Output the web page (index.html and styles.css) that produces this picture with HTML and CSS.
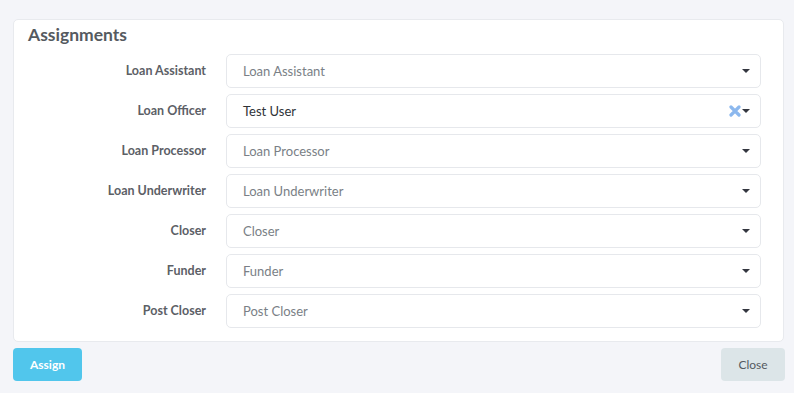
FILE: index.html
```html
<!DOCTYPE html>
<html>
<head>
<meta charset="utf-8">
<link rel="stylesheet" href="styles.css">
</head>
<body>
<div class="modal">
  <div class="card">
    <div class="title">Assignments</div>
    <div class="form">
      <label class="lbl">Loan Assistant</label>
      <div class="select"><span class="ph">Loan Assistant</span><span class="caret"></span></div>
      <label class="lbl">Loan Officer</label>
      <div class="select"><span class="val">Test User</span><svg class="clear" width="12" height="12" viewBox="0 0 12 12"><path d="M2 2 L10 10 M10 2 L2 10" stroke="#8cb8ee" stroke-width="3.2" stroke-linecap="round"/></svg><span class="caret tight"></span></div>
      <label class="lbl">Loan Processor</label>
      <div class="select"><span class="ph">Loan Processor</span><span class="caret"></span></div>
      <label class="lbl">Loan Underwriter</label>
      <div class="select"><span class="ph">Loan Underwriter</span><span class="caret"></span></div>
      <label class="lbl">Closer</label>
      <div class="select"><span class="ph">Closer</span><span class="caret"></span></div>
      <label class="lbl">Funder</label>
      <div class="select"><span class="ph">Funder</span><span class="caret"></span></div>
      <label class="lbl">Post Closer</label>
      <div class="select"><span class="ph">Post Closer</span><span class="caret"></span></div>
    </div>
  </div>
  <div class="actions">
    <button class="btn assign">Assign</button>
    <button class="btn close">Close</button>
  </div>
</div>
</body>
</html>
```
FILE: styles.css
```css
* { box-sizing: border-box; }
html, body { margin: 0; padding: 0; }
body {
  background: #f4f5f9;
  font-family: Lato, "Liberation Sans", sans-serif;
  width: 794px;
  height: 393px;
  overflow: hidden;
}
.modal {
  padding: 19px 10px 0 13px;
}
.card {
  background: #fff;
  border: 1px solid #e8eaee;
  border-radius: 5px;
  padding: 2px 22px 13px 14px;
}
.title {
  font-size: 17.5px;
  font-weight: 700;
  color: #555a60;
  line-height: 26px;
  margin-bottom: 6px;
}
.form {
  display: grid;
  grid-template-columns: 178px 1fr;
  column-gap: 20px;
  row-gap: 6px;
  align-items: center;
}
.lbl {
  text-align: right;
  font-size: 12.5px;
  font-weight: 700;
  color: #5c6066;
  line-height: 16px;
}
.select {
  height: 34px;
  border: 1px solid #e6e8ec;
  border-radius: 5px;
  display: flex;
  align-items: center;
  padding: 0 10px 0 16px;
  font-size: 13px;
}
.ph { color: #7a7f86; flex: 1; }
.val { color: #2f3338; flex: 1; }
.clear { margin-right: 1px; }
.caret {
  width: 0; height: 0;
  border-left: 4px solid transparent;
  border-right: 4px solid transparent;
  border-top: 4px solid #33363f;
}
.actions {
  display: flex;
  justify-content: space-between;
  margin-top: 6px;
}
.btn {
  height: 33px;
  border: none;
  border-radius: 4px;
  font-family: Lato, "Liberation Sans", sans-serif;
  font-size: 12px;
  padding: 0;
}
.assign {
  width: 69px;
  background: #51c6ec;
  color: #fff;
  font-weight: 700;
}
.close {
  width: 64px;
  background: #dce5e8;
  color: #555a60;
  margin-right: -1px;
}
```
